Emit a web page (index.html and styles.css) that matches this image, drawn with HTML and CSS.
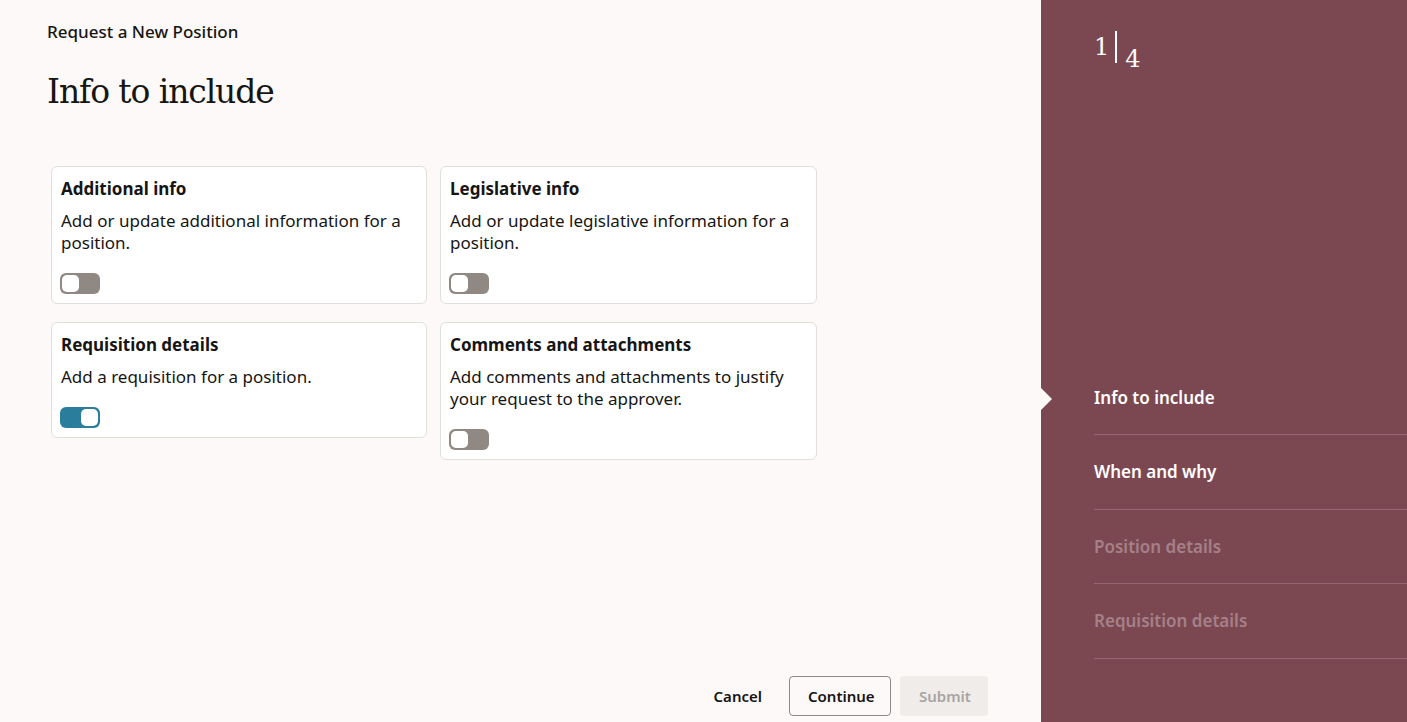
FILE: index.html
```html
<!DOCTYPE html>
<html lang="en">
<head>
  <meta charset="UTF-8">
  <meta name="viewport" content="width=device-width, initial-scale=1.0">
  <title>Request a New Position</title>
  <link rel="stylesheet" href="styles.css">
</head>
<body>
  <div class="page">
    <div class="mainPane">
      <div class="pageTitle">Request a New Position</div>
      <h1 class="stepTitle">Info to include</h1>

      <div class="cardGrid">
        <div class="optCard">
          <div class="optTitle">Additional info</div>
          <div class="optDesc">Add or update additional information for a position.</div>
          <span class="switch"></span>
        </div>
        <div class="optCard">
          <div class="optTitle">Legislative info</div>
          <div class="optDesc">Add or update legislative information for a position.</div>
          <span class="switch"></span>
        </div>
        <div class="optCard">
          <div class="optTitle">Requisition details</div>
          <div class="optDesc">Add a requisition for a position.</div>
          <span class="switch on"></span>
        </div>
        <div class="optCard">
          <div class="optTitle">Comments and attachments</div>
          <div class="optDesc">Add comments and attachments to justify your request to the approver.</div>
          <span class="switch"></span>
        </div>
      </div>

      <div class="footerBar">
        <button class="btn btn-text">Cancel</button>
        <button class="btn btn-outline">Continue</button>
        <button class="btn btn-disabled" disabled>Submit</button>
      </div>
    </div>

    <div class="sidePane">
      <div class="stepCount">
        <span class="cur">1</span><span class="bar"></span><span class="tot">4</span>
      </div>
      <ul class="stepList">
        <li class="active">Info to include</li>
        <li class="done">When and why</li>
        <li>Position details</li>
        <li>Requisition details</li>
      </ul>
    </div>
  </div>
</body>
</html>
```

FILE: styles.css
```css
html, body{margin: 0; padding: 0; height: 100%;}
body{background: #fcf9f8; font-family: "Noto Sans", "Open Sans", sans-serif; color: #161513;}

.page{display: flex; height: 100vh;}

.mainPane{flex: 1; display: flex; flex-direction: column; padding: 18px 53px 6px 47px;}

.pageTitle{font-size: 17px; font-weight: 500; line-height: 28px;}
.stepTitle{font-family: "DejaVu Serif", Georgia, serif; font-weight: 400; font-size: 33px; margin: 24px 0 0; line-height: 44px; letter-spacing: -1.1px;}

.cardGrid{display: grid; grid-template-columns: 376px 377px; gap: 18px 13px; align-items: start; margin: 52px 0 0 4px;}

.optCard{background: #fff; border: 1px solid #e2dedb; border-radius: 6px; padding: 9px 9px 9px 9px;}
.optTitle{font-size: 17px; font-weight: 700; line-height: 26px; margin-bottom: 8px;}
.optDesc{font-size: 17px; line-height: 22px; margin-bottom: 19px;}

.switch{display: block; position: relative; width: 40px; height: 21px; border-radius: 6px; background: #8f8883; margin-left: -1px;}
.switch:after{content: ""; position: absolute; left: 2px; top: 2px; width: 17px; height: 17px; border-radius: 5px; background: #fff;}
.switch.on{background: #2b7d9c;}
.switch.on:after{left: 21px;}

.footerBar{margin-top: auto; display: flex; justify-content: flex-end; align-items: center; gap: 9px;}
.btn{font-family: inherit; font-size: 15px; font-weight: 600; height: 40px; border-radius: 4px; padding: 0 18px; background: none; border: 1px solid transparent; color: #161513;}
.btn-text{padding: 0 17px;}
.btn-outline{border-color: #8e8985; width: 102px;}
.btn-disabled{background: #efecea; color: #a9a5a2; width: 88px;}

.sidePane{width: 366px; background: #7b4852; color: #fff; position: relative; display: flex; flex-direction: column;}

.stepCount{display: flex; align-items: flex-start; padding: 31px 0 0 53px; font-family: "DejaVu Serif", Georgia, serif; font-size: 24px; height: 71px; box-sizing: border-box;}
.stepCount .cur{line-height: 32px;}
.stepCount .bar{width: 2px; height: 32px; background: #fff; margin: 0 8px 0 6px;}
.stepCount .tot{line-height: 32px; margin-top: 12px;}

.stepList{list-style: none; margin: 311px 0 0 53px; padding: 0;}
.stepList li{font-size: 17px; font-weight: 600; line-height: 20px; height: 74.5px; box-sizing: border-box; padding-top: 27px; border-bottom: 1px solid #94666f; color: #a58088; position: relative;}
.stepList li:first-child{height: 53px; padding-top: 6px;}
.stepList li.active, .stepList li.done{color: #fff;}
.stepList li.active:before{content: ""; position: absolute; left: -53px; top: 6px; border-style: solid; border-width: 11px 0 11px 11px; border-color: transparent transparent transparent #fcf9f8;}
```
